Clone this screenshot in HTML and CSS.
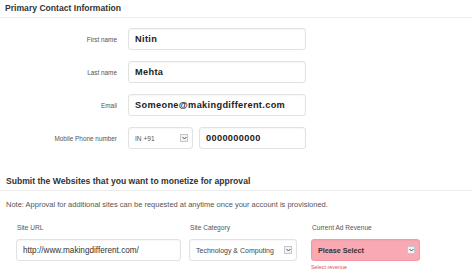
FILE: index.html
```html
<!DOCTYPE html>
<html lang="en">
<head>
    <meta charset="UTF-8">
    <title>Publisher Signup</title>
    <link rel="stylesheet" href="styles.css">
</head>
<body>
    <div class="page">
        <h2 class="section-title">Primary Contact Information</h2>

        <div class="contact-form">
            <div class="form-row">
                <label class="row-label">First name</label>
                <div class="field field-wide bold">Nitin</div>
            </div>
            <div class="form-row">
                <label class="row-label">Last name</label>
                <div class="field field-wide bold">Mehta</div>
            </div>
            <div class="form-row">
                <label class="row-label">Email</label>
                <div class="field field-wide bold">Someone@makingdifferent.com</div>
            </div>
            <div class="form-row">
                <label class="row-label">Mobile Phone number</label>
                <div class="phone-group">
                    <div class="field select country">
                        <span class="select-text">IN +91</span>
                        <span class="arrow">
                            <svg viewBox="0 0 6 4" width="5" height="4"><path d="M0.6 0.8 L3 3.2 L5.4 0.8" fill="none" stroke="#555" stroke-width="1.2"/></svg>
                        </span>
                    </div>
                    <div class="field phone bold">0000000000</div>
                </div>
            </div>
        </div>

        <h2 class="section-title second">Submit the Websites that you want to monetize for approval</h2>
        <p class="note">Note: Approval for additional sites can be requested at anytime once your account is provisioned.</p>

        <div class="site-grid">
            <div class="site-col col-url">
                <label class="col-label">Site URL</label>
                <div class="field url-field">http://www.makingdifferent.com/</div>
            </div>
            <div class="site-col col-category">
                <label class="col-label">Site Category</label>
                <div class="field select small-text">
                    <span class="select-text">Technology &amp; Computing</span>
                    <span class="arrow">
                        <svg viewBox="0 0 6 4" width="5" height="4"><path d="M0.6 0.8 L3 3.2 L5.4 0.8" fill="none" stroke="#555" stroke-width="1.2"/></svg>
                    </span>
                </div>
            </div>
            <div class="site-col col-revenue">
                <label class="col-label">Current Ad Revenue</label>
                <div class="field select error">
                    <span class="select-text">Please Select</span>
                    <span class="arrow">
                        <svg viewBox="0 0 6 4" width="5" height="4"><path d="M0.6 0.8 L3 3.2 L5.4 0.8" fill="none" stroke="#555" stroke-width="1.2"/></svg>
                    </span>
                </div>
                <span class="error-text">Select revenue</span>
            </div>
        </div>
    </div>
</body>
</html>
```

FILE: styles.css
```css
* {
    margin: 0;
    padding: 0;
    box-sizing: border-box;
}

body {
    font-family: 'Liberation Sans', Arial, sans-serif;
    color: #333;
    background-color: #fff;
}

.page {
    width: 474px;
    padding-right: 2px;
}

.section-title {
    font-size: 8.6px;
    font-weight: bold;
    color: #333;
    padding: 3px 0 4px 5px;
    line-height: 10px;
    border-bottom: 1px solid #ececec;
}

.section-title.second {
    margin-top: 24px;
    padding-left: 6px;
}

.contact-form {
    padding-top: 10px;
}

.form-row {
    display: flex;
    align-items: center;
    height: 22px;
    margin-bottom: 11px;
}

.row-label {
    width: 128px;
    padding-right: 11px;
    text-align: right;
    font-size: 6.4px;
    color: #555;
}

.field {
    height: 22px;
    border: 1px solid #e2e2e2;
    border-radius: 3px;
    background: #fff;
    box-shadow: inset 0 1px 2px rgba(0,0,0,0.04);
    display: flex;
    align-items: center;
    padding-left: 6px;
    font-size: 7.6px;
    color: #333;
}

.bold {
    font-weight: bold;
    font-size: 9.2px;
    letter-spacing: 0.35px;
    color: #222;
}

.field-wide {
    width: 178px;
}

.phone-group {
    display: flex;
    gap: 6px;
}

.select {
    justify-content: space-between;
    padding-right: 4px;
}

.country {
    width: 65px;
    font-size: 6.6px;
    color: #555;
}

.phone {
    width: 107px;
}

.arrow {
    width: 8px;
    height: 8px;
    border: 1px solid #c8c8c8;
    background: #f2f2f2;
    display: flex;
    align-items: center;
    justify-content: center;
}

.note {
    font-size: 7.5px;
    color: #555;
    padding: 9px 0 0 6px;
    line-height: 9px;
}

.site-grid {
    display: flex;
    padding: 14px 0 0 16px;
}

.site-col {
    display: flex;
    flex-direction: column;
}

.col-url {
    width: 165px;
    margin-right: 8px;
}

.col-category {
    width: 108px;
    margin-right: 14px;
}

.col-revenue {
    width: 109px;
}

.col-label {
    font-size: 6.6px;
    color: #555;
    line-height: 9px;
    margin-bottom: 7px;
    padding-left: 1px;
}

.url-field {
    font-size: 8.2px;
}

.small-text {
    font-size: 7px;
    color: #444;
}

.error {
    background: #f9a9b3;
    border-color: #f19aa4;
    font-size: 7.2px;
    font-weight: bold;
    color: #333;
}

.error-text {
    font-size: 5.4px;
    color: #d9534f;
    margin-top: 3px;
}
```
